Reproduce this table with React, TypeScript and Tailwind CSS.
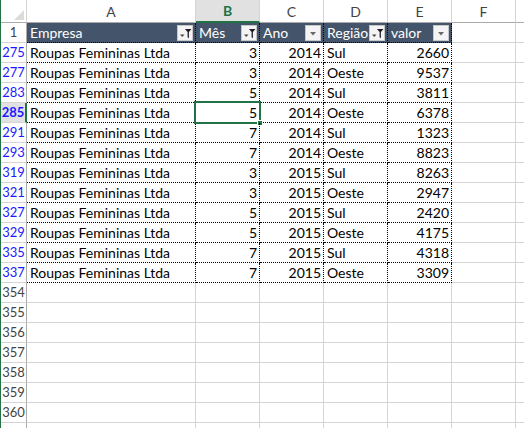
import React from 'react';

type Row = [number, number, number, string, number];

const rows: Row[] = [
  [275, 3, 2014, 'Sul', 2660],
  [277, 3, 2014, 'Oeste', 9537],
  [283, 5, 2014, 'Sul', 3811],
  [285, 5, 2014, 'Oeste', 6378],
  [291, 7, 2014, 'Sul', 1323],
  [293, 7, 2014, 'Oeste', 8823],
  [319, 3, 2015, 'Sul', 8263],
  [321, 3, 2015, 'Oeste', 2947],
  [327, 5, 2015, 'Sul', 2420],
  [329, 5, 2015, 'Oeste', 4175],
  [335, 7, 2015, 'Sul', 4318],
  [337, 7, 2015, 'Oeste', 3309],
];

const emptyRows = [354, 355, 356, 357, 358, 359, 360];

const FilterButton = ({ active }: { active: boolean }) => (
  <svg width="16" height="16" viewBox="0 0 16 16" className="shrink-0 mr-[2px]">
    <rect x="0.5" y="0.5" width="15" height="15" fill="#f4f4f4" stroke="#c8c8c8" />
    {active ? (
      <>
        <path d="M3 9.5h4.5l-2.25 2.5z" fill="#444" />
        <path d="M8 4h6.5l-2.6 3v6.2l-1.3-1V7z" fill="#1e1e1e" />
      </>
    ) : (
      <path d="M5 7h6l-3 3.5z" fill="#6a6a6a" />
    )}
  </svg>
);

const RowNum = ({ n, blue, selected }: { n?: number; blue?: boolean; selected?: boolean }) => {
  if (selected) {
    return (
      <div className="w-[26px] h-full shrink-0 flex items-center justify-center border-b border-r-2 border-b-[#d4d4d4] border-r-[#217346] bg-[#e1e1e1] text-[13px] font-bold text-[#1a1aff]">
        {n}
      </div>
    );
  }
  return (
    <div
      className={
        'w-[26px] h-full shrink-0 flex items-center justify-center border-b border-r border-b-[#d4d4d4] border-r-[#ababab] text-[13px] ' +
        (blue ? 'text-[#1a1aff]' : 'text-[#444]')
      }
    >
      {n}
    </div>
  );
};

const ColumnHeaders = () => (
  <div className="flex h-[23px] text-[14px] text-[#444]">
    <div className="w-[26px] shrink-0 flex items-end justify-end pr-[2px] pb-[2px] border-r border-b border-r-[#d4d4d4] border-b-[#ababab]">
      <svg width="10" height="10" viewBox="0 0 10 10">
        <path d="M10 0V10H0z" fill="#dcdcdc" />
      </svg>
    </div>
    <div className="w-[169px] shrink-0 flex items-center justify-center border-r border-b border-r-[#d4d4d4] border-b-[#ababab]">A</div>
    <div className="w-[64px] shrink-0 flex items-center justify-center border-r border-b-2 border-r-[#d4d4d4] border-b-[#217346] bg-[#e1e1e1] font-bold text-[#217346]">B</div>
    <div className="w-[64px] shrink-0 flex items-center justify-center border-r border-b border-r-[#d4d4d4] border-b-[#ababab]">C</div>
    <div className="w-[64px] shrink-0 flex items-center justify-center border-r border-b border-r-[#d4d4d4] border-b-[#ababab]">D</div>
    <div className="w-[64px] shrink-0 flex items-center justify-center border-r border-b border-r-[#d4d4d4] border-b-[#ababab]">E</div>
    <div className="w-[64px] shrink-0 flex items-center justify-center border-r border-b border-r-[#d4d4d4] border-b-[#ababab]">F</div>
    <div className="w-[64px] shrink-0 border-r border-b border-r-[#d4d4d4] border-b-[#ababab]" />
  </div>
);

const TableHeader = () => (
  <div className="flex h-[20px] leading-[19px]">
    <RowNum n={1} />
    <div className="w-[169px] shrink-0 flex items-center pl-[3px] bg-[#44546a] text-white border-r border-b border-dotted border-black">
      <span className="flex-1">Empresa</span>
      <FilterButton active />
    </div>
    <div className="w-[64px] shrink-0 flex items-center pl-[3px] bg-[#44546a] text-white border-r border-b border-dotted border-black">
      <span className="flex-1">Mês</span>
      <FilterButton active />
    </div>
    <div className="w-[64px] shrink-0 flex items-center pl-[3px] bg-[#44546a] text-white border-r border-b border-dotted border-black">
      <span className="flex-1">Ano</span>
      <FilterButton active={false} />
    </div>
    <div className="w-[64px] shrink-0 flex items-center pl-[3px] bg-[#44546a] text-white border-r border-b border-dotted border-black">
      <span className="flex-1">Região</span>
      <FilterButton active />
    </div>
    <div className="w-[64px] shrink-0 flex items-center pl-[3px] bg-[#44546a] text-white border-r border-b border-dotted border-black">
      <span className="flex-1">valor</span>
      <FilterButton active={false} />
    </div>
    <div className="w-[64px] shrink-0 border-r border-b border-[#d4d4d4]" />
    <div className="w-[64px] shrink-0 border-r border-b border-[#d4d4d4]" />
  </div>
);

const DataRow = ({ row }: { row: Row }) => {
  const [n, mes, ano, regiao, valor] = row;
  const selected = n === 285;
  return (
    <div className="flex h-[20px] leading-[19px]">
      <RowNum n={n} blue selected={selected} />
      <div className="w-[169px] shrink-0 flex items-center pl-[3px] border-r border-b border-dotted border-black">
        Roupas Femininas Ltda
      </div>
      <div className="relative w-[64px] shrink-0 flex items-center justify-end pr-[2px] border-r border-b border-dotted border-black">
        {mes}
        {selected && (
          <div className="absolute left-[-2px] top-[-2px] right-[-2px] bottom-[-2px] border-2 border-[#217346]">
            <div className="absolute right-[-4px] bottom-[-4px] w-[6px] h-[6px] bg-[#217346] border border-white" />
          </div>
        )}
      </div>
      <div className="w-[64px] shrink-0 flex items-center justify-end pr-[2px] border-r border-b border-dotted border-black">{ano}</div>
      <div className="w-[64px] shrink-0 flex items-center pl-[3px] border-r border-b border-dotted border-black">{regiao}</div>
      <div className="w-[64px] shrink-0 flex items-center justify-end pr-[2px] border-r border-b border-dotted border-black">{valor}</div>
      <div className="w-[64px] shrink-0 border-r border-b border-[#d4d4d4]" />
      <div className="w-[64px] shrink-0 border-r border-b border-[#d4d4d4]" />
    </div>
  );
};

const EmptyRow = ({ n }: { n?: number }) => (
  <div className="flex h-[20px] leading-[19px]">
    <RowNum n={n} />
    <div className="w-[169px] shrink-0 border-r border-b border-[#d4d4d4]" />
    <div className="w-[64px] shrink-0 border-r border-b border-[#d4d4d4]" />
    <div className="w-[64px] shrink-0 border-r border-b border-[#d4d4d4]" />
    <div className="w-[64px] shrink-0 border-r border-b border-[#d4d4d4]" />
    <div className="w-[64px] shrink-0 border-r border-b border-[#d4d4d4]" />
    <div className="w-[64px] shrink-0 border-r border-b border-[#d4d4d4]" />
    <div className="w-[64px] shrink-0 border-r border-b border-[#d4d4d4]" />
  </div>
);

export default function App() {
  return (
    <div className="w-[524px] h-[428px] overflow-hidden bg-white border-l border-[#217346] font-['Lato',sans-serif] text-[14px] text-black">
      <ColumnHeaders />
      <TableHeader />
      {rows.map(r => (
        <DataRow key={r[0]} row={r} />
      ))}
      {emptyRows.map(n => (
        <EmptyRow key={n} n={n} />
      ))}
      <EmptyRow />
    </div>
  );
}
